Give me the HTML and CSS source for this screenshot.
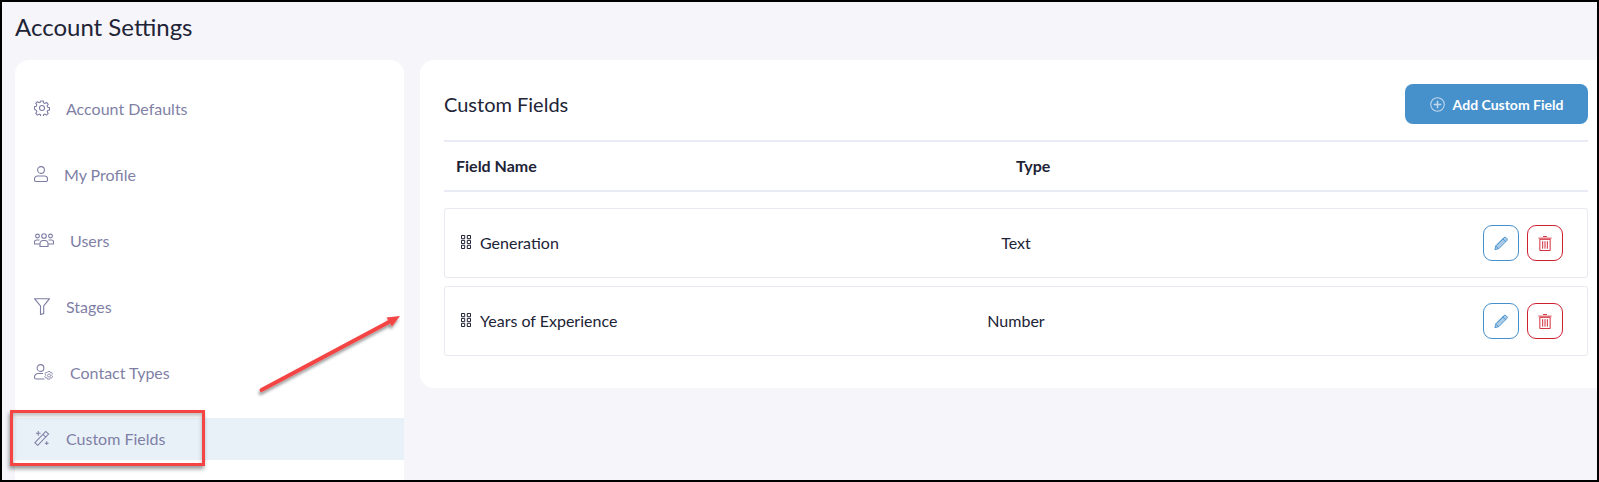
FILE: index.html
```html
<!DOCTYPE html>
<html lang="en">
<head>
<meta charset="utf-8">
<title>Account Settings</title>
<link rel="stylesheet" href="styles.css">
</head>
<body>
<div class="frame">
  <h1 class="page-title">Account Settings</h1>
  <div class="layout">
    <nav class="sidebar">
      <a class="nav-item">
        <svg class="ico w16" viewBox="0 0 16 16" fill="none" stroke="currentColor" stroke-width="1.100"><path d="M6.800 1h2.400l.4 1.900 1.300.6 1.700-1 1.600 1.700-1 1.600.6 1.400 1.700.4v2.400l-1.700.4-.6 1.400 1 1.600-1.600 1.700-1.700-1-1.300.6-.4 1.900H6.800l-.4-1.900-1.300-.6-1.700 1-1.600-1.700 1-1.600-.6-1.400L.5 9.200V6.800l1.700-.4.6-1.400-1-1.600 1.600-1.700 1.700 1 1.300-.6z"/><circle cx="8" cy="8" r="2.500"/></svg>
        <span>Account Defaults</span>
      </a>
      <a class="nav-item">
        <svg class="ico w14" viewBox="0 0 14 16" fill="none" stroke="currentColor" stroke-width="1.100"><circle cx="7" cy="4" r="3.400"/><path d="M3.500 10h7a3 3 0 0 1 3 3v1a1.500 1.500 0 0 1-1.500 1.500H2A1.500 1.500 0 0 1 .5 14v-1a3 3 0 0 1 3-3z"/></svg>
        <span>My Profile</span>
      </a>
      <a class="nav-item">
        <svg class="ico w20" viewBox="0 0 20 14" fill="none" stroke="currentColor" stroke-width="1.100"><circle cx="10" cy="3" r="2.300"/><circle cx="3.500" cy="3" r="1.900"/><circle cx="16.500" cy="3" r="1.900"/><path d="M6 13.500v-3a3 3 0 0 1 3-3h2a3 3 0 0 1 3 3v3zM5.500 11H.5V9a2 2 0 0 1 2-2h3M14.500 11h5V9a2 2 0 0 0-2-2h-3"/></svg>
        <span>Users</span>
      </a>
      <a class="nav-item">
        <svg class="ico w16" viewBox="0 0 16 17" fill="none" stroke="currentColor" stroke-width="1.100"><path d="M.5.700h15L9.700 8v7.500l-3.200 1V8z"/></svg>
        <span>Stages</span>
      </a>
      <a class="nav-item">
        <svg class="ico w20" viewBox="0 0 20 16" fill="none" stroke="currentColor" stroke-width="1.100"><circle cx="6.500" cy="4" r="3.400"/><path d="M10.500 15H2a1.500 1.500 0 0 1-1.500-1.500V13a3.500 3.500 0 0 1 3.500-3.500h5"/><g stroke-width=".8"><circle cx="15" cy="11.500" r="1.500"/><path d="M14 7.500h2l.3 1.200 1.200-.4 1 1.700-.9.900.1.600.9.900-1 1.700-1.200-.4-.4.300-.3 1.200h-2l-.3-1.200-.4-.3-1.200.4-1-1.700.9-.9v-.6l-.9-.9 1-1.700 1.200.4.400-.3z"/></g></svg>
        <span>Contact Types</span>
      </a>
      <a class="nav-item active">
        <svg class="ico w16" viewBox="0 0 17 17" fill="none" stroke="currentColor" stroke-width="1.100"><path d="M1 13.500L12.500 1.500l3 2.800L4 16.300zM9.500 4.700l3 2.800"/><path d="M4.500 1v5M2 3.500h5M13.500 12v4M11.500 14h4"/></svg>
        <span>Custom Fields</span>
      </a>
    </nav>
    <main class="panel">
      <header class="panel-head">
        <h2 class="panel-title">Custom Fields</h2>
        <button class="btn-add">
          <svg class="plus" viewBox="0 0 14 14" fill="none" stroke="currentColor" stroke-width="1"><circle cx="7" cy="7" r="6.300"/><path d="M7 3.500v7M3.500 7h7" stroke-width="1.400"/></svg>
          Add Custom Field
        </button>
      </header>
      <div class="table-head">
        <span class="th-name">Field Name</span>
        <span>Type</span>
      </div>
      <div class="rows">
        <div class="row">
          <div class="cell-name">
            <svg class="grip" viewBox="0 0 10 14" fill="none" stroke="currentColor" stroke-width="1"><path d="M.5.500h3.200v3.200H.5zM6.300.500h3.200v3.200H6.300zM.5 5.400h3.200v3.200H.5zM6.300 5.400h3.200v3.200H6.300zM.5 10.300h3.200v3.200H.5zM6.300 10.300h3.200v3.200H6.300z"/></svg>
            Generation
          </div>
          <div class="cell-type">Text</div>
          <div class="actions">
            <button class="btn-icon edit"><svg viewBox="0 0 16 16"><path d="M1 15l1-4.300L11.500 1.200a1.500 1.500 0 0 1 2.100 0l1.200 1.200a1.500 1.500 0 0 1 0 2.100L5.300 14z" fill="#a9cbe8" stroke="currentColor"/><path d="M2 10.700L5.300 14M10 2.700l3.300 3.300M3.500 9.500l8-8" fill="none" stroke="currentColor"/></svg></button>
            <button class="btn-icon del"><svg viewBox="0 0 14 16"><path d="M0 2.500h14" stroke="#e88b90" stroke-width="2"/><path d="M5 .500h4" stroke="currentColor"/><path d="M1.500 3.500h11v12h-11zM4.500 5.500v8M7 5.500v8M9.500 5.500v8" fill="none" stroke="currentColor"/></svg></button>
          </div>
        </div>
        <div class="row">
          <div class="cell-name">
            <svg class="grip" viewBox="0 0 10 14" fill="none" stroke="currentColor" stroke-width="1"><path d="M.5.500h3.200v3.200H.5zM6.300.500h3.200v3.200H6.300zM.5 5.400h3.200v3.200H.5zM6.300 5.400h3.200v3.200H6.300zM.5 10.300h3.200v3.200H.5zM6.300 10.300h3.200v3.200H6.300z"/></svg>
            Years of Experience
          </div>
          <div class="cell-type">Number</div>
          <div class="actions">
            <button class="btn-icon edit"><svg viewBox="0 0 16 16"><path d="M1 15l1-4.300L11.500 1.200a1.500 1.500 0 0 1 2.100 0l1.200 1.200a1.500 1.500 0 0 1 0 2.100L5.300 14z" fill="#a9cbe8" stroke="currentColor"/><path d="M2 10.700L5.300 14M10 2.700l3.300 3.300M3.500 9.500l8-8" fill="none" stroke="currentColor"/></svg></button>
            <button class="btn-icon del"><svg viewBox="0 0 14 16"><path d="M0 2.500h14" stroke="#e88b90" stroke-width="2"/><path d="M5 .500h4" stroke="currentColor"/><path d="M1.500 3.500h11v12h-11zM4.500 5.500v8M7 5.500v8M9.500 5.500v8" fill="none" stroke="currentColor"/></svg></button>
          </div>
        </div>
      </div>
    </main>
  </div>
  <div class="callout-box"></div>
  <svg class="callout-arrow" viewBox="0 0 150 90">
    <defs><filter id="sh" x="-20%" y="-20%" width="140%" height="140%"><feDropShadow dx="-1" dy="3" stdDeviation="1.500" flood-color="#000" flood-opacity=".4"/></filter></defs>
    <g filter="url(#sh)"><path d="M6.500 77L134 9" stroke="#f44444" stroke-width="4" stroke-linecap="round" fill="none"/><path d="M145 3l-13.500 1.500 5.500 9z" fill="#f44444"/></g>
  </svg>
</div>
</body>
</html>
```

FILE: styles.css
```css
* { box-sizing: border-box; }
html, body { margin: 0; padding: 0; }
body {
  width: 1599px;
  height: 482px;
  overflow: hidden;
  font-family: Lato, "Noto Sans", sans-serif;
  color: #212336;
}
.frame {
  position: relative;
  width: 1599px;
  height: 482px;
  border: 2px solid #000;
  background: #f5f5fa;
  overflow: hidden;
  padding: 0 0 0 13px;
}
.page-title {
  margin: 0;
  height: 58px;
  line-height: 50px;
  font-size: 24px;
  font-weight: 400;
  color: #212336;
}
.layout {
  display: flex;
  align-items: flex-start;
  gap: 16px;
}
.sidebar {
  width: 389px;
  height: 440px;
  flex: none;
  background: #fff;
  border-radius: 14px 14px 0 0;
  padding-top: 28px;
  display: flex;
  flex-direction: column;
  gap: 24px;
}
.nav-item {
  display: flex;
  align-items: center;
  gap: 16px;
  height: 42px;
  padding: 0 0 2px 19px;
  font-size: 16px;
  color: #7f7fa6;
}
.nav-item.active { background: #e9f1f8; }
.ico { flex: none; height: auto; color: #7d7da3; }
.w14 { width: 14px; }
.w16 { width: 16px; }
.w20 { width: 20px; }
.panel {
  flex: 1;
  background: #fff;
  border-radius: 14px 0 0 14px;
  padding: 24px 9px 32px 24px;
}
.panel-head {
  display: flex;
  align-items: center;
  justify-content: space-between;
  height: 40px;
  margin-bottom: 16px;
}
.panel-title {
  margin: 0;
  font-size: 20px;
  font-weight: 400;
  color: #212336;
}
.btn-add {
  width: 183px;
  height: 40px;
  display: flex;
  align-items: center;
  justify-content: center;
  gap: 8px;
  border: 0;
  border-radius: 8px;
  background: #4690cc;
  color: #fff;
  font: 700 14px Lato, sans-serif;
}
.plus { width: 15px; height: 15px; color: #c3daee; }
.table-head {
  display: flex;
  align-items: center;
  height: 52px;
  padding: 0 0 2px 12px;
  border-top: 2px solid #e8eaf4;
  border-bottom: 2px solid #e8eaf4;
  font-size: 16px;
  font-weight: 700;
  color: #212336;
}
.th-name { width: 560px; }
.rows {
  display: flex;
  flex-direction: column;
  gap: 8px;
  margin-top: 16px;
}
.row {
  display: grid;
  grid-template-columns: 495px 120px 1fr;
  align-items: center;
  height: 70px;
  padding: 0 24px 0 16px;
  border: 1px solid #e9e9f2;
  border-radius: 3px;
  font-size: 16px;
  color: #212336;
}
.cell-name { display: flex; align-items: center; gap: 9px; padding-bottom: 2px; }
.grip { width: 10px; height: 14px; color: #212336; }
.cell-type { text-align: center; padding-bottom: 2px; }
.actions { display: flex; justify-content: flex-end; gap: 8px; }
.btn-icon {
  width: 36px;
  height: 36px;
  padding: 0;
  display: flex;
  align-items: center;
  justify-content: center;
  background: #fff;
  border: 1px solid;
  border-radius: 9px;
}
.btn-icon svg { width: 14px; height: 15px; }
.edit { color: #4690cc; }
.del { color: #cf2030; }
.callout-box {
  position: absolute;
  left: 8px;
  top: 408px;
  width: 195px;
  height: 56px;
  border: 3px solid #f44444;
  box-shadow: -1px 3px 4px rgba(0, 0, 0, .4), inset 0 3px 4px rgba(0, 0, 0, .25);
}
.callout-arrow {
  position: absolute;
  left: 253px;
  top: 311px;
  width: 150px;
  height: 90px;
}
```
